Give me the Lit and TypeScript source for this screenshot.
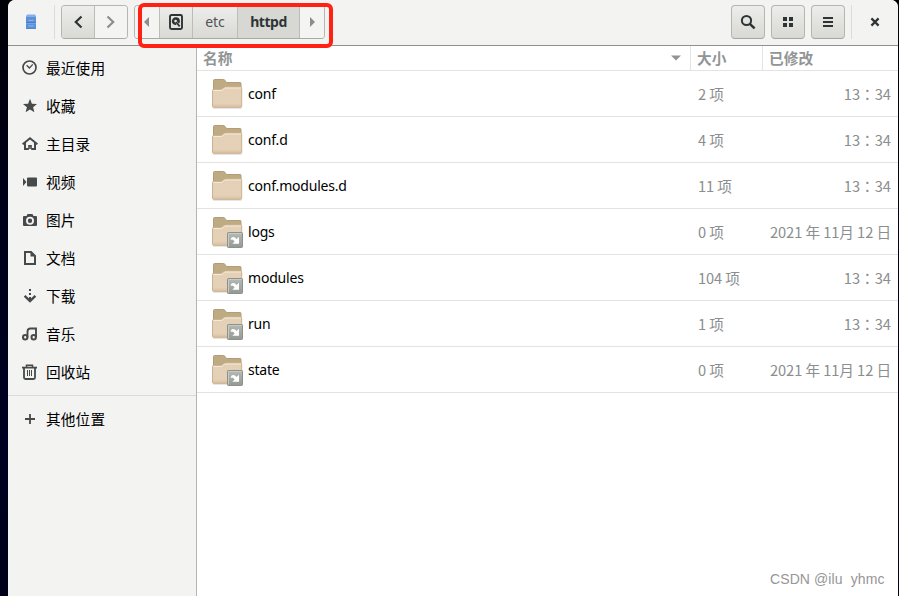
import { LitElement, html, svg, css } from "lit";
import { customElement } from "lit/decorators.js";
import { classMap } from "lit/directives/class-map.js";

const line = (d: string, w = 2) => svg`<path d=${d} fill="none" stroke="currentColor" stroke-width=${w}/>`;
const solid = (d: string) => svg`<path d=${d} fill="currentColor" fill-rule="evenodd"/>`;

const icons: Record<string, unknown> = {
  recent: svg`<circle cx="7.5" cy="7.5" r="6.5" fill="none" stroke="currentColor" stroke-width="1.7"/>${line("M4.6 5.2 7.4 8 10.8 4.4", 1.3)}`,
  star: solid("M8 .8 9.9 5.7 15 6 11.1 9.2 12.4 14.3 8 11.5 3.6 14.3 4.9 9.2 1 6 6.1 5.7Z"),
  home: svg`${line("M.6 8.2 8 2.2 15.4 8.2", 2)}${line("M3 7V13H6.8M9.2 13H13V7", 2)}${line("M7 13V9.8H9V13", 1.6)}`,
  video: svg`<rect x="5" y="3.5" width="10" height="9" rx="1" fill="currentColor"/>${solid("M1 4 4.5 8 1 12Z")}`,
  photo: solid("M5.5 2H10.5L11.5 4H14Q15 4 15 5V13Q15 14 14 14H2Q1 14 1 13V5Q1 4 2 4H4.5ZM8 4.8A4 4 0 1 0 8 12.8A4 4 0 1 0 8 4.8ZM8 6.6A2.2 2.2 0 1 1 8 11A2.2 2.2 0 1 1 8 6.6Z"),
  doc: svg`${line("M3 2H9L13 6V14H3Z", 2)}${solid("M8.5 2V6.5H13Z")}`,
  down: svg`${line("M8 1V3M8 5V7M8 9V13", 2)}${line("M2.6 7.8 8 13 13.4 7.8", 2.4)}`,
  music: svg`<circle cx="3.2" cy="11.3" r="2.2" fill="none" stroke="currentColor" stroke-width="2"/><circle cx="11.7" cy="11.3" r="2.2" fill="none" stroke="currentColor" stroke-width="2"/>${line("M5.5 11.5V5.5Q5.5 2.5 8.5 2.5H14V11.5", 1.9)}`,
  trash: svg`${line("M0 3.6H15", 1.8)}${line("M4.5 3V1.2H10.5V3", 1.5)}${line("M2 4V13.5Q2 15 3.5 15H11.5Q13 15 13 13.5V4", 1.8)}${line("M5.5 6V12M7.5 6V12M9.5 6V12", 1)}`,
  plus: line("M3 8H13M8 3V13", 1.8),
  back: line("M11.5 2.5 5.8 8 11.5 13.5", 2.2),
  forward: line("M4.5 2.5 10.2 8 4.5 13.5", 2.2),
  left: solid("M10 3V13L5 8Z"),
  right: solid("M6 3V13L11 8Z"),
  disk: svg`<rect x="2" y="1" width="12" height="14" rx="1.5" fill="none" stroke="currentColor" stroke-width="1.9"/>${solid("M8 3.3A3.9 3.9 0 0 1 11.9 7.2Q11.9 8.6 11 9.8L9 7.5A1.4 1.4 0 1 0 7.6 8.6L8.5 11A3.9 3.9 0 1 1 8 3.3Z")}${line("M8 8 11.7 12.4", 1.7)}`,
  search: svg`<circle cx="6.5" cy="6.5" r="4.6" fill="none" stroke="currentColor" stroke-width="2"/>${line("M9.8 9.8 14.6 14.4", 2.5)}`,
  grid: solid("M3 3H7V7H3ZM9 3H13V7H9ZM3 9H7V13H3ZM9 9H13V13H9Z"),
  menu: solid("M3 3H13V5H3ZM3 7H13V9H3ZM3 11H13V13H3Z"),
  close: line("M4.4 4.4 11.6 11.6M11.6 4.4 4.4 11.6", 2.2),
  sort: solid("M3 5.5H13L8 10.5Z"),
};
const icon = (name: string) => html`<svg class="icon" viewBox="0 0 16 16">${icons[name]}</svg>`;

const places = [
  ["recent", "最近使用"], ["star", "收藏"], ["home", "主目录"], ["video", "视频"], ["photo", "图片"],
  ["doc", "文档"], ["down", "下载"], ["music", "音乐"], ["trash", "回收站"],
];

interface Entry { name: string; size: string; date: string; link?: boolean; }
const entries: Entry[] = [
  { name: "conf", size: "2 项", date: "13：34" },
  { name: "conf.d", size: "4 项", date: "13：34" },
  { name: "conf.modules.d", size: "11 项", date: "13：34" },
  { name: "logs", size: "0 项", date: "2021 年 11月 12 日", link: true },
  { name: "modules", size: "104 项", date: "13：34", link: true },
  { name: "run", size: "1 项", date: "13：34", link: true },
  { name: "state", size: "0 项", date: "2021 年 11月 12 日", link: true },
];

const folder = (link = false) => html`<svg class="folder" viewBox="0 0 32 32">
  <defs>
    <linearGradient id="front" x1="0" y1="0" x2="0" y2="1"><stop offset="0" stop-color="#e3d0b5"/><stop offset=".8" stop-color="#e4d1b8"/><stop offset="1" stop-color="#dbbfa0"/></linearGradient>
    <linearGradient id="tag" x1="0" y1="0" x2="0" y2="1"><stop offset="0" stop-color="#b6bab4"/><stop offset="1" stop-color="#949a93"/></linearGradient>
  </defs>
  <path d="M1 30H29.5" stroke="#000" stroke-opacity=".2"/>
  <path d="M1.5 14V2.5Q1.5 1.5 2.5 1.5H11.5Q12.5 1.5 13.2 2.7L14.5 4.5H28Q29 4.5 29 5.5V14Z" fill="#bfab83" stroke="#b59c74"/>
  <path d="M.5 28.5V12.5Q.5 11.5 1.5 11.5H8.5Q10 11.5 11 10.2Q12.2 9 13.5 9H28.5Q29.7 9 29.7 10V28.5Q29.7 29.3 28.7 29.3H1.5Q.5 29.3 .5 28.5Z" fill="url(#front)" stroke="#cbb28f"/>
  <path d="M1.5 12.5H9Q10.4 12.4 11.5 11Q12.5 10 14 10H29" fill="none" stroke="#f5ead8"/>
  ${link ? svg`<rect x="15.5" y="16.5" width="15" height="15" rx=".8" fill="url(#tag)" stroke="#8c918a"/>
    <path d="M16.5 30.5V17.5H29.5" fill="none" stroke="#c7cbc5"/>
    <path d="M18.6 24Q18.8 21 21.3 21Q23 21 24.6 23L27 20.8V27.8H20.4L22.6 25.5Q20.8 22.6 18.6 24Z" fill="#fff"/>` : ""}
</svg>`;

@customElement("app-root")
export class AppRoot extends LitElement {
  static styles = css`
    * { box-sizing: border-box; }
    :host {
      box-sizing: border-box; display: flex; width: 899px; height: 596px; overflow: hidden; padding: 0 1px 0 8px;
      background: linear-gradient(#000007, #00001a 35%, #000022 75%, #00001a);
      font: 14.67px/20px "Noto Sans CJK SC", sans-serif; color: #161a1b; position: relative;
    }
    .window { flex: 1; display: flex; flex-direction: column; min-width: 0; background: #fff; border-radius: 7px 7px 0 0; overflow: hidden; }
    .icon { width: 16px; height: 16px; display: block; flex: none; }
    header { height: 46px; flex: none; display: flex; align-items: flex-start; padding: 5px 6px 0 15px; background: #f3f3f2; border-bottom: 1.5px solid #91918b; color: #2e3436; }
    .app { width: 16px; height: 16px; margin: 9px 15px 0 0; }
    .divider { width: 1px; height: 34px; background: #dcdcda; }
    .group { display: flex; height: 34px; border: 1px solid #b6b6b0; border-bottom-color: #aaaaa4; border-radius: 4px; overflow: hidden; }
    .cell { display: flex; align-items: center; justify-content: center; border-right: 1px solid #bdbdb8; background: linear-gradient(#ededeb, #d9d9d5); }
    .cell:last-child { border-right: 0; }
    .flat { background: #f4f4f3; color: #8b8e8f; }
    .nav { margin-left: 6px; width: 67px; }
    .nav .cell { width: 33px; flex: none; }
    .nav .cell:last-child { width: 32px; }
    .path { margin-left: 6px; width: 191px; }
    .p0 { width: 25px; } .p1 { width: 33px; } .p2 { width: 45px; color: #505455; } .p3 { width: 62px; } .p4 { width: 24px; }
    .cell.current { background: #d7d7d4; font-weight: bold; }
    .latin { font-family: "Noto Sans", "Noto Sans CJK SC", sans-serif; font-size: 14px; }
    .p3 .latin { letter-spacing: -.45px; }
    .name .latin { letter-spacing: -.2px; }
    .tools { display: flex; gap: 6px; margin-left: auto; }
    .button { width: 34px; height: 34px; border: 1px solid #b6b6b0; border-bottom-color: #a6a6a0; border-radius: 4px; background: linear-gradient(#ededeb, #d8d8d4); display: flex; align-items: center; justify-content: center; }
    .tools + .divider { margin-left: 6px; }
    .close { width: 34px; height: 34px; margin-left: 6px; display: flex; align-items: center; justify-content: center; }
    main { flex: 1; display: flex; min-height: 0; }
    aside { width: 189px; flex: none; background: #f3f3f2; border-right: 1px solid #b5b5b0; padding-top: 3px; color: #000; letter-spacing: .15px; }
    .place { height: 38px; display: flex; align-items: center; gap: 8px; padding-left: 14px; }
    .place .icon { color: #474a4a; }
    .places { border-bottom: 1px solid #dadad7; height: 347px; margin-bottom: 4px; }
    .files { flex: 1; min-width: 0; }
    .row { display: grid; grid-template-columns: 494px 72px 1fr; height: 46px; border-bottom: 1px solid #e3e3e1; align-items: center; color: #8b8e8f; }
    .head { height: 25px; font-weight: bold; color: #929595; align-items: stretch; letter-spacing: .15px; }
    .head > div { padding: 0 6px; display: flex; align-items: center; justify-content: space-between; border-right: 1px solid #e3e3e1; }
    .head > div:last-child { border: 0; }
    .name { display: flex; align-items: center; padding-left: 15px; color: #000; height: 45px; }
    .folder { width: 32px; height: 32px; display: block; margin-right: 4px; }
    .size { padding-left: 7px; letter-spacing: -.1px; }
    .date { text-align: right; padding-right: 7px; white-space: nowrap; font-family: "Noto Sans CJK TC", sans-serif; }
    .long { padding-right: 7px; letter-spacing: -.08px; font-family: "Noto Sans CJK SC", sans-serif; }
    .frame { position: absolute; left: 138px; top: 3px; width: 195px; height: 45px; border: 4px solid #ff2113; border-radius: 6px; }
    .mark { position: absolute; left: 770px; top: 569px; font: 14px/20px "Liberation Sans", sans-serif; letter-spacing: .1px; color: #969696; white-space: pre; }
  `;

  render() {
    return html`
      <div class="window">
        <header>
          <svg class="app" viewBox="0 0 16 16">
            <path d="M4 1H12L13 3V14.5H3V3Z" fill="#5c90d9"/><path d="M4 .5H12L13 3H3Z" fill="#85aee8"/>
            <path d="M3 8.5H13M3 14.5H13" stroke="#4577c2" stroke-width=".8"/><path d="M3 9.5H13" stroke="#74a2e2"/>
            <path d="M6 5.5V6.5H10V5.5M6 11V12H10V11" stroke="#9fc0ee" fill="none" stroke-width=".7"/>
          </svg>
          <div class="divider"></div>
          <div class="group nav"><div class="cell">${icon("back")}</div><div class="cell flat">${icon("forward")}</div></div>
          <div class="group path">
            <div class="cell flat p0">${icon("left")}</div>
            <div class="cell p1">${icon("disk")}</div>
            <div class="cell p2"><span class="latin">etc</span></div>
            <div class="cell current p3"><span class="latin">httpd</span></div>
            <div class="cell flat p4">${icon("right")}</div>
          </div>
          <div class="tools">${["search", "grid", "menu"].map((n) => html`<div class="button">${icon(n)}</div>`)}</div>
          <div class="divider"></div>
          <div class="close">${icon("close")}</div>
        </header>
        <main>
          <aside>
            <div class="places">${places.map(([i, label]) => html`<div class="place">${icon(i)}<span>${label}</span></div>`)}</div>
            <div class="place">${icon("plus")}<span>其他位置</span></div>
          </aside>
          <section class="files">
            <div class="row head"><div>名称${icon("sort")}</div><div>大小</div><div>已修改</div></div>
            ${entries.map((e) => html`<div class="row">
              <div class="name">${folder(e.link)}<span class="latin">${e.name}</span></div>
              <div class="size">${e.size}</div>
              <div class=${classMap({ date: true, long: e.date.length > 6 })}>${e.date}</div>
            </div>`)}
          </section>
        </main>
      </div>
      <div class="frame"></div>
      <div class="mark">CSDN @ilu  yhmc</div>
    `;
  }
}
